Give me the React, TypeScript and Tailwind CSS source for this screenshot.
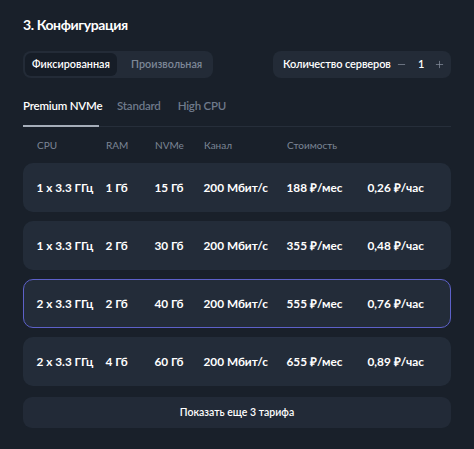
import { Minus, Plus } from "lucide-react";

const plans = [
  { cpu: "1 x 3.3 ГГц", ram: "1 Гб", disk: "15 Гб", net: "200 Мбит/с", month: "188 ₽/мес", hour: "0,26 ₽/час" },
  { cpu: "1 x 3.3 ГГц", ram: "2 Гб", disk: "30 Гб", net: "200 Мбит/с", month: "355 ₽/мес", hour: "0,48 ₽/час" },
  { cpu: "2 x 3.3 ГГц", ram: "2 Гб", disk: "40 Гб", net: "200 Мбит/с", month: "555 ₽/мес", hour: "0,76 ₽/час", active: true },
  { cpu: "2 x 3.3 ГГц", ram: "4 Гб", disk: "60 Гб", net: "200 Мбит/с", month: "655 ₽/мес", hour: "0,89 ₽/час" },
];

const cols = "grid grid-cols-[69px_49px_49px_83px_81px_1fr] items-center";

export default function App() {
  return (
    <div className="w-[474px] h-[449px] overflow-hidden bg-[#19202a] px-[23px] pt-[15px] font-['Lato',sans-serif] text-white">
      {/* Заголовок */}
      <h2 className="text-[14px] leading-[20px] font-bold tracking-[-0.4px]">3. Конфигурация</h2>

      <div className="mt-4 flex items-center justify-between">
        <div className="flex h-[27px] w-[190px] items-center rounded-[8px] bg-[#232b37] p-[2px] text-[10.8px] font-semibold">
          <span className="flex h-[23px] w-[92px] items-center justify-center rounded-[6px] bg-[#161d27] text-white">
            Фиксированная
          </span>
          <span className="ml-[14px] text-[#7d8797]">Произвольная</span>
        </div>

        <div className="flex h-[27px] w-[178px] items-center rounded-[8px] bg-[#232b37] pl-[10px] text-[11px] font-semibold">
          <span className="w-[113px] whitespace-nowrap tracking-[-0.1px]">Количество серверов</span>
          <Minus className="h-[11px] w-[11px] text-[#8a93a2]" strokeWidth={1.5} />
          <span className="ml-[11px] w-[6px] text-center">1</span>
          <Plus className="ml-[10px] h-[11px] w-[11px] text-[#8a93a2]" strokeWidth={1.5} />
        </div>
      </div>

      {/* Вкладки */}
      <div className="mt-[19px] flex border-b border-[#262e3a] text-[11.5px] font-semibold tracking-[-0.2px]">
        <span className="-mb-[1px] w-[76px] whitespace-nowrap border-b-2 border-[#a5adb9] pb-[11px] text-white">Premium NVMe</span>
        <span className="ml-[18px] text-[#6f7a8b]">Standard</span>
        <span className="ml-[17px] text-[#6f7a8b]">High CPU</span>
      </div>

      <div className={`${cols} h-[36px] pl-[14px] text-[10px] text-[#7c8696]`}>
        <span>CPU</span>
        <span>RAM</span>
        <span>NVMe</span>
        <span>Канал</span>
        <span>Стоимость</span>
        <span />
      </div>

      <div className="flex flex-col gap-[9px]">
        {plans.map((p, i) => (
          <div
            key={i}
            className={`${cols} h-[49px] rounded-[10px] border-[1.5px] bg-[#232c39] pl-[12.5px] text-[11.8px] font-bold ${
              p.active ? "border-[#5d61c9]" : "border-transparent"
            }`}
          >
            <span className="whitespace-nowrap">{p.cpu}</span>
            <span>{p.ram}</span>
            <span>{p.disk}</span>
            <span className="whitespace-nowrap">{p.net}</span>
            <span className="whitespace-nowrap">{p.month}</span>
            <span className="whitespace-nowrap">{p.hour}</span>
          </div>
        ))}
      </div>

      <button className="mt-[11px] flex h-[31px] w-full items-center justify-center rounded-[9px] bg-[#222a37] text-[10.5px] font-semibold text-white">
        Показать еще 3 тарифа
      </button>
    </div>
  );
}
